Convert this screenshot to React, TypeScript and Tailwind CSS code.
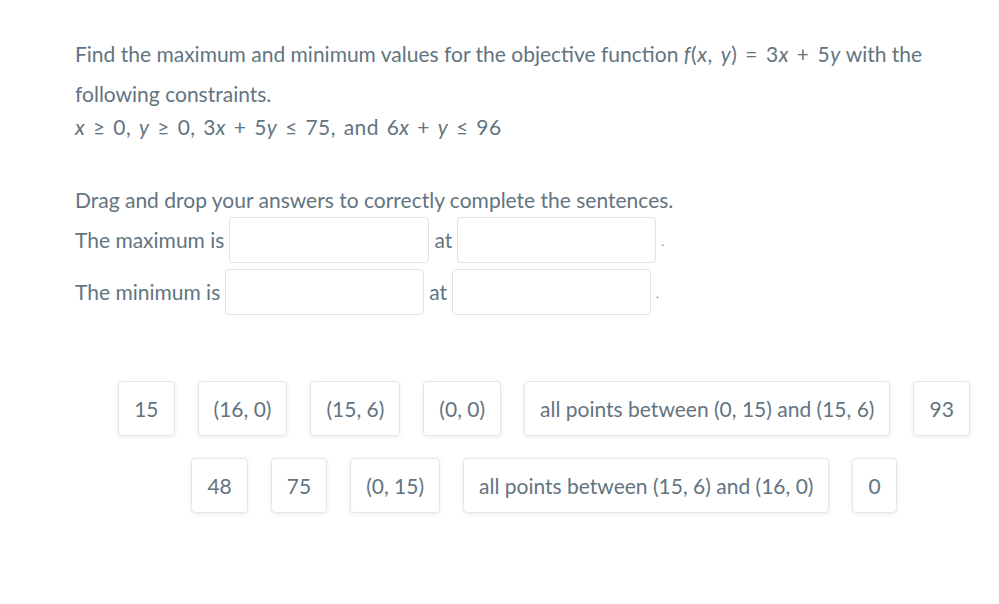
import React from "react";

const row1 = ["15", "(16, 0)", "(15, 6)", "(0, 0)", "all points between (0, 15) and (15, 6)", "93"];
const row2 = ["48", "75", "(0, 15)", "all points between (15, 6) and (16, 0)", "0"];

function V({ children }: { children: React.ReactNode }) {
  return <span className="italic">{children}</span>;
}

function Drop({ w }: { w: string }) {
  return <span className={`inline-block h-[46px] rounded-[4px] border border-[#dfe3e6] bg-white ${w}`} />;
}

function Chip({ label }: { label: string }) {
  return (
    <div className="h-[55px] rounded-[4px] border border-[#e4e7ea] bg-white px-[15px] flex items-center shadow-[0_1px_4px_rgba(0,0,0,0.08)] whitespace-nowrap">
      {label}
    </div>
  );
}

export default function App() {
  return (
    <div className="min-h-screen bg-white text-[#62747f] text-[21px] font-['Lato','Open_Sans',sans-serif] pl-[75px] pt-[34px]">
      <p className="leading-[40px] w-[880px]">
        Find the maximum and minimum values for the objective function{" "}
        <span className="tracking-wide [word-spacing:2px]">
          <V>f</V>(<V>x</V>, <V>y</V>) = 3<V>x</V> + 5<V>y</V>
        </span>{" "}
        with the following constraints.
      </p>
      <div className="leading-[26px] tracking-[0.02em] [word-spacing:2px]">
        <V>x</V> ≥ 0, <V>y</V> ≥ 0, 3<V>x</V> + 5<V>y</V> ≤ 75, and 6<V>x</V> + <V>y</V> ≤ 96
      </div>

      <div className="mt-[46px] leading-[28px]">Drag and drop your answers to correctly complete the sentences.</div>

      <div className="mt-[3px] flex items-center gap-[5px]">
        <span>The maximum is</span>
        <Drop w="w-[200px]" />
        <span>at</span>
        <Drop w="w-[199px]" />
        <span className="text-[12px] self-end mb-[12px]">.</span>
      </div>
      <div className="mt-[6px] flex items-center gap-[5px]">
        <span>The minimum is</span>
        <Drop w="w-[199px]" />
        <span>at</span>
        <Drop w="w-[199px]" />
        <span className="text-[12px] self-end mb-[12px]">.</span>
      </div>

      <div className="ml-[15px] w-[908px] mt-[66px] flex flex-col items-center gap-[22px]">
        <div className="flex gap-[23px]">
          {row1.map((l) => (
            <Chip key={l} label={l} />
          ))}
        </div>
        <div className="flex gap-[23px]">
          {row2.map((l) => (
            <Chip key={l} label={l} />
          ))}
        </div>
      </div>
    </div>
  );
}
